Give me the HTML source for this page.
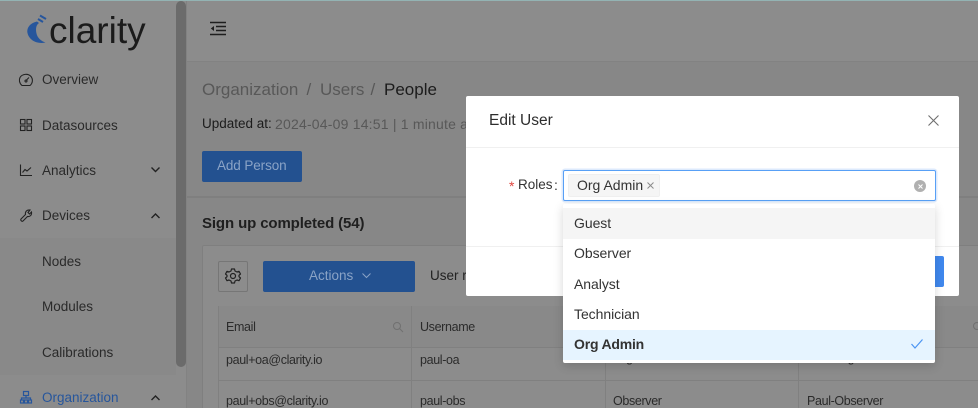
<!DOCTYPE html>
<html><head><meta charset="utf-8"><title>Edit User</title>
<style>
html,body{margin:0;padding:0;width:978px;height:408px;overflow:hidden}
body{position:relative;background:#878787;font-family:"Liberation Sans",sans-serif;color:#262626}
div{position:absolute}
.t{position:absolute;white-space:nowrap;line-height:20px;font-size:14px}
svg{position:absolute;overflow:visible}
.m{color:#2a2a2a;font-size:13.5px}
.c{color:#2b2b2b;font-size:12.5px;letter-spacing:-.35px}
.o{font-size:14px;color:#333;left:574px;letter-spacing:-.05px}
.b{font-size:17px;color:#585858}
</style></head><body>

<!-- sidebar -->
<div style="left:0;top:0;width:186px;height:408px;background:#8c8c8c"></div>
<div style="left:0;top:238px;width:176px;height:137px;background:#898989"></div>
<div style="left:176px;top:1px;width:10px;height:366px;border-radius:5px;background:#6b6b6b"></div>
<div style="left:186px;top:0;width:1px;height:408px;background:#828282"></div>

<!-- header -->
<div style="left:187px;top:0;width:791px;height:61px;background:#8c8c8c;border-bottom:1px solid #828282"></div>
<div style="left:0;top:0;width:978px;height:1px;background:#93b3b3"></div>

<!-- logo -->
<svg style="left:0;top:0" width="60" height="50" viewBox="0 0 60 50">
<path d="M37 21.500 C30 23 26.500 28 27.500 33 C29 40 37 44.500 45.500 42.500 C41 41 37.500 38 36.500 33.500 C35.500 29 36 25 39 23 Z" fill="#27569c"/>
<path d="M40 15.500 L46 19 M38 19 L43 22" stroke="#27569c" stroke-width="2" fill="none"/>
</svg>
<span class="t" style="left:49px;top:11px;font-size:37px;line-height:40px;color:#1b1b1b">clarity</span>

<!-- nav icons -->
<svg style="left:19px;top:73px" width="14" height="14" viewBox="0 0 14 14" fill="none" stroke="#222" stroke-width="1.100"><path d="M3 12.500 C0 10 0 6.500 1 4.500 C3 1 9 0 12 3.500 C14 6 14 10 11 12.500 Z"/><path d="M7 7.500 L10 4.500"/><circle cx="7" cy="8" r="1"/></svg>
<svg style="left:20px;top:119px" width="12" height="12" viewBox="0 0 12 12" fill="none" stroke="#222" stroke-width="1.100"><rect x=".5" y=".5" width="4.500" height="4.500"/><rect x="7" y=".5" width="4.500" height="4.500"/><rect x=".5" y="7" width="4.500" height="4.500"/><rect x="7" y="7" width="4.500" height="4.500"/></svg>
<svg style="left:20px;top:164px" width="12" height="13" viewBox="0 0 12 13" fill="none" stroke="#222" stroke-width="1.100"><path d="M.5 .5 V11.500 H12"/><path d="M2.500 8.500 L5 5.500 L7 7 L11 3.500"/></svg>
<svg style="left:20px;top:209px" width="12" height="13" viewBox="0 0 12 13" fill="none" stroke="#222" stroke-width="1.100"><path d="M1 10 L5.500 5.500 C5 3 6.500 .5 10 1 L8 3.500 L9.500 5 L11.500 3 C12 6 10 8 7.500 7.500 L3 12 C2 13 0 11 1 10 Z"/></svg>
<svg style="left:20px;top:391px" width="12" height="13" viewBox="0 0 12 13" fill="none" stroke="#27569c" stroke-width="1.200"><rect x="3.500" y=".5" width="5" height="4"/><path d="M6 4.500 V7 M1.500 9 V7 H10.500 V9"/><rect x=".5" y="9" width="3" height="3"/><rect x="4.500" y="9" width="3" height="3"/><rect x="8.500" y="9" width="3" height="3"/></svg>

<!-- nav text -->
<span class="t m" style="left:42px;top:70px">Overview</span>
<span class="t m" style="left:42px;top:116px">Datasources</span>
<span class="t m" style="left:42px;top:161px">Analytics</span>
<span class="t m" style="left:42px;top:206px">Devices</span>
<span class="t m" style="left:42px;top:252px">Nodes</span>
<span class="t m" style="left:42px;top:297px">Modules</span>
<span class="t m" style="left:42px;top:343px">Calibrations</span>
<span class="t m" style="left:42px;top:388px;color:#27569c">Organization</span>

<!-- chevrons -->
<svg style="left:151px;top:167px" width="9" height="6" fill="none" stroke="#222" stroke-width="1.400"><path d="M.5 .5 L4.500 4.500 L8.500 .5"/></svg>
<svg style="left:151px;top:213px" width="9" height="6" fill="none" stroke="#222" stroke-width="1.400"><path d="M.5 5 L4.500 1 L8.500 5"/></svg>
<svg style="left:151px;top:395px" width="9" height="6" fill="none" stroke="#222" stroke-width="1.400"><path d="M.5 5 L4.500 1 L8.500 5"/></svg>

<!-- header toggle icon -->
<svg style="left:210px;top:21px" width="16" height="15" fill="none" stroke="#1e1e1e" stroke-width="1.400"><path d="M0 1.500 H16 M6 5.500 H16 M6 9.500 H16 M0 13.500 H16"/><path d="M4 5 V10 L.8 7.500 Z" fill="#1e1e1e" stroke="none"/></svg>

<!-- page head -->
<span class="t b" style="left:202px;top:80px">Organization</span>
<span class="t b" style="left:306.500px;top:80px">/</span>
<span class="t b" style="left:320px;top:80px">Users</span>
<span class="t b" style="left:370.500px;top:80px">/</span>
<span class="t b" style="left:384px;top:80px;color:#1c1c1c">People</span>
<span class="t" style="left:202px;top:114px;font-size:13.500px;color:#1c1c1c">Updated at:</span>
<span class="t" style="left:275px;top:114px;font-size:14px;color:#585858;letter-spacing:.2px">2024-04-09 14:51 | 1 minute ago</span>

<div style="left:202px;top:151px;width:100px;height:31px;background:#235190;border-radius:2px"></div>
<span class="t" style="left:217px;top:156px;color:#8aa3c6;font-size:13.500px;letter-spacing:-.1px">Add Person</span>
<div style="left:187px;top:196px;width:791px;height:2px;background:#7f7f7f"></div>
<span class="t" style="left:202px;top:214px;font-size:15px;font-weight:bold;color:#1f1f1f;letter-spacing:-.12px">Sign up completed (54)</span>

<!-- card -->
<div style="left:202px;top:245px;width:790px;height:180px;background:#8c8c8c;border:1px solid #7f7f7f;box-sizing:border-box;border-radius:2px"></div>
<div style="left:218px;top:261px;width:30px;height:31px;box-sizing:border-box;border:1px solid #767676;border-radius:2px"></div>
<svg style="left:225px;top:268px" width="16" height="16" viewBox="0 0 16 16" fill="none" stroke="#222" stroke-width="1.200"><path d="M6.500 1 H9.500 L10 3 L12 4 L14 3.300 L15.500 6 L14 7.300 V8.700 L15.500 10 L14 12.700 L12 12 L10 13 L9.500 15 H6.500 L6 13 L4 12 L2 12.700 L.5 10 L2 8.700 V7.300 L.5 6 L2 3.300 L4 4 L6 3 Z" stroke-linejoin="round"/><circle cx="8" cy="8" r="2.500"/></svg>
<div style="left:263px;top:261px;width:152px;height:31px;background:#235190;border-radius:2px"></div>
<span class="t" style="left:309px;top:265.500px;color:#8aa3c6;font-size:13.500px">Actions</span>
<svg style="left:362px;top:273px" width="9" height="6" fill="none" stroke="#8aa3c6" stroke-width="1"><path d="M.5 .5 L4.500 4.500 L8.500 .5"/></svg>
<span class="t" style="left:430px;top:265.500px;color:#222;font-size:13.500px">User role</span>

<!-- table -->
<div style="left:218px;top:306px;width:760px;height:41px;background:#898989"></div>
<div style="left:218px;top:347px;width:760px;height:1px;background:#808080"></div>
<div style="left:218px;top:380px;width:760px;height:1px;background:#808080"></div>
<div style="left:218px;top:306px;width:1px;height:102px;background:#808080"></div>
<div style="left:411px;top:306px;width:1px;height:102px;background:#808080"></div>
<div style="left:605px;top:306px;width:1px;height:102px;background:#808080"></div>
<div style="left:798px;top:306px;width:1px;height:102px;background:#808080"></div>
<span class="t c" style="left:226px;top:317px">Email</span>
<span class="t c" style="left:420px;top:317px">Username</span>
<svg style="left:393px;top:322px" width="10" height="10" fill="none" stroke="#707070" stroke-width="1"><circle cx="4" cy="4" r="3.500"/><path d="M6.500 6.500 L10 10"/></svg>
<svg style="left:973px;top:322px" width="10" height="10" fill="none" stroke="#707070" stroke-width="1"><circle cx="4" cy="4" r="3.500"/></svg>
<span class="t c" style="left:226px;top:350px">paul+oa@clarity.io</span>
<span class="t c" style="left:420px;top:350px">paul-oa</span>
<span class="t c" style="left:613px;top:348px">Org Admin</span>
<span class="t c" style="left:807px;top:348px">Paul-Org-Admin</span>
<span class="t c" style="left:226px;top:391px">paul+obs@clarity.io</span>
<span class="t c" style="left:420px;top:391px">paul-obs</span>
<span class="t c" style="left:613px;top:391px">Observer</span>
<span class="t c" style="left:807px;top:391px">Paul-Observer</span>

<!-- modal -->
<div style="left:466px;top:96px;width:493px;height:200px;background:#fff;border-radius:2px"></div>
<div style="left:466px;top:147px;width:493px;height:1px;background:#f0f0f0"></div>
<div style="left:466px;top:246px;width:493px;height:1px;background:#f0f0f0"></div>
<div style="left:900px;top:256px;width:44px;height:31px;background:#4088ee;border-radius:2px"></div>
<span class="t" style="left:489px;top:111px;font-size:15.500px;color:#2d2d2d">Edit User</span>
<svg style="left:928px;top:115px" width="11" height="11" fill="none" stroke="#6f6f6f" stroke-width="1.100"><path d="M.5 .5 L10.500 10.500 M10.500 .5 L.5 10.500"/></svg>
<span class="t" style="left:509px;top:176px;font-size:14px;color:#e0463f">*</span>
<span class="t" style="left:518px;top:175px;font-size:13.500px;color:#333">Roles</span>
<span class="t" style="left:554px;top:175px;font-size:14px;color:#333">:</span>

<!-- select -->
<div style="left:563px;top:170px;width:373px;height:31px;box-sizing:border-box;background:#fff;border:1.500px solid #58a0f6;border-radius:2px;box-shadow:0 0 0 1.500px rgba(64,136,238,.18)"></div>
<div style="left:568px;top:174px;width:92px;height:23px;background:#f5f5f5;border-radius:2px;border:1px solid #efefef;box-sizing:border-box"></div>
<span class="t" style="left:577px;top:175px;font-size:14px;color:#333">Org Admin</span>
<svg style="left:647px;top:182px" width="7" height="7" fill="none" stroke="#8b8b8b" stroke-width="1"><path d="M.5 .5 L6.500 6.500 M6.500 .5 L.5 6.500"/></svg>
<div style="left:914px;top:180px;width:12px;height:12px;border-radius:50%;background:#b0b0b0"></div>
<svg style="left:917.500px;top:183.500px" width="5" height="5" fill="none" stroke="#fff" stroke-width="1"><path d="M.5 .5 L4.500 4.500 M4.500 .5 L.5 4.500"/></svg>

<!-- dropdown -->
<div style="left:563px;top:204px;width:372px;height:159px;background:#fff;border-radius:2px;box-shadow:0 3px 10px rgba(0,0,0,.16)"></div>
<div style="left:563px;top:208px;width:372px;height:30.500px;background:#f5f5f5"></div>
<div style="left:563px;top:329.500px;width:372px;height:30.500px;background:#e6f4ff"></div>
<span class="t o" style="top:213px">Guest</span>
<span class="t o" style="top:243px">Observer</span>
<span class="t o" style="top:274px">Analyst</span>
<span class="t o" style="top:304px">Technician</span>
<span class="t o" style="top:334px;font-weight:bold;letter-spacing:-.2px">Org Admin</span>
<svg style="left:911px;top:338.500px" width="12" height="10" fill="none" stroke="#4b94f2" stroke-width="1.200"><path d="M.5 5 L4 9 L11.500 .5"/></svg>
</body></html>
